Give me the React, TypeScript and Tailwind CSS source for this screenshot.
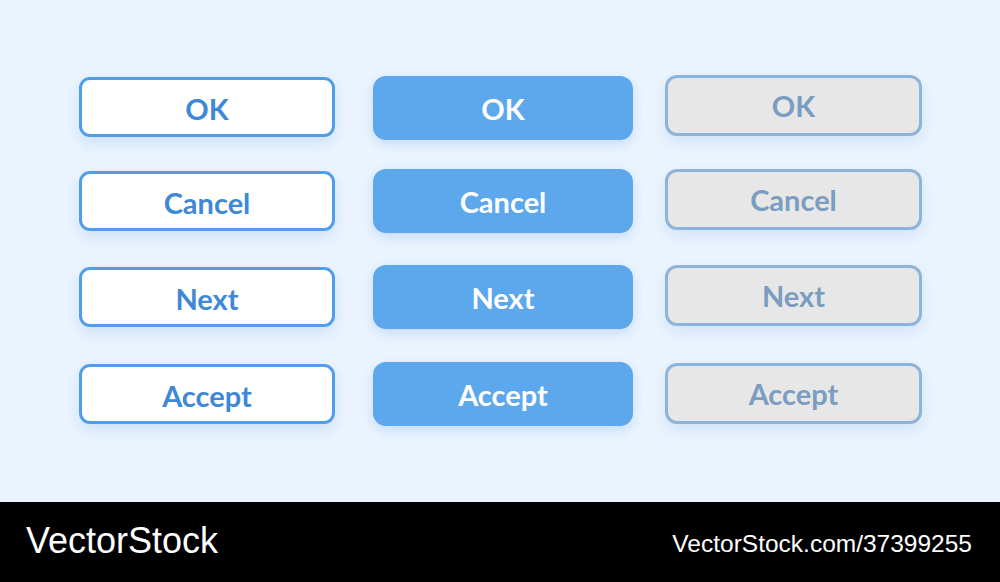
import React from "react";

const labels = ["OK", "Cancel", "Next", "Accept"];
const col1Gaps = ["mt-[2px]", "mt-[34px]", "mt-[36px]", "mt-[37px]"];
const col2Gaps = ["mt-[1px]", "mt-[29px]", "mt-[32px]", "mt-[33px]"];
const col3Gaps = ["mt-0", "mt-[33px]", "mt-[35px]", "mt-[37px]"];

export default function App() {
  return (
    <div className="w-[1000px] h-[582px] flex flex-col bg-[#ebf4fe] overflow-hidden">
      <div className="h-[502px] flex flex-row items-start pt-[75px]" style={{ fontFamily: "Lato, 'Open Sans', sans-serif" }}>
        <div className="ml-[79px] w-[256px] flex flex-col">
          {labels.map((l, i) => (
            <div
              key={l}
              className={`${col1Gaps[i]} h-[60px] rounded-[11px] border-[3px] border-[#509de9] bg-white flex items-center justify-center text-[29px] font-bold text-[#3e88d6] shadow-[0_6px_14px_rgba(120,170,230,0.25)]`}
            >
              <span className="mt-[3px]">{l}</span>
            </div>
          ))}
        </div>
        <div className="ml-[38px] w-[260px] flex flex-col">
          {labels.map((l, i) => (
            <div
              key={l}
              className={`${col2Gaps[i]} h-[64px] rounded-[13px] bg-[#5da7ec] flex items-center justify-center text-[29px] font-bold text-white shadow-[0_4px_12px_rgba(110,165,230,0.3)]`}
            >
              <span className="mt-[1px]">{l}</span>
            </div>
          ))}
        </div>
        <div className="ml-[32px] w-[257px] flex flex-col">
          {labels.map((l, i) => (
            <div
              key={l}
              className={`${col3Gaps[i]} h-[61px] rounded-[12px] border-[3px] border-[#8fb4da] bg-[#e7e7e7] flex items-center justify-center text-[29px] font-bold text-[#7a9dc1] shadow-[0_6px_14px_rgba(120,170,230,0.22)]`}
            >
              <span className="mt-[1px]">{l}</span>
            </div>
          ))}
        </div>
      </div>
      <div
        className="h-[80px] bg-black flex items-center justify-between pl-[26px] pr-[28px] text-white"
        style={{ fontFamily: "'Liberation Sans', Arial, sans-serif" }}
      >
        <span className="text-[36px] leading-none mt-[-2px]">VectorStock</span>
        <span className="text-[24.5px] leading-none mt-[4px]">VectorStock.com/37399255</span>
      </div>
    </div>
  );
}
